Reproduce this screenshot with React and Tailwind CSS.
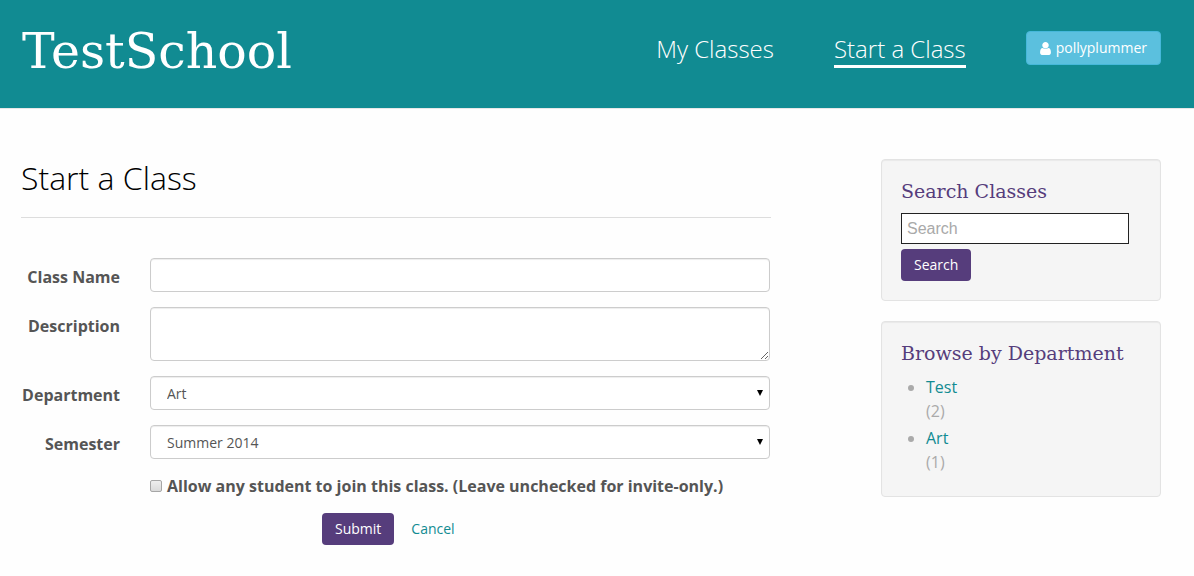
import React, { useState } from 'react';

const DEPARTMENTS = [
  { name: 'Test', count: 2 },
  { name: 'Art', count: 1 },
];

const SEMESTERS = ['Summer 2014', 'Fall 2014', 'Spring 2015'];

const SLAB = "font-['DejaVu_Serif',serif]";
const FIELD = 'block w-full rounded border border-[#cccccc] bg-white text-sm text-[#555555] shadow-[inset_0_1px_1px_rgba(0,0,0,0.075)]';
const PRIMARY_BTN = 'h-8 rounded bg-[#563d7c] px-[13px] text-sm text-white hover:bg-[#45306a]';

function UserIcon() {
  return (
    <svg className="h-[13px] w-[11px]" viewBox="0 128 1280 1536" fill="currentColor" aria-hidden="true">
      <path d="M1280 1399q0 109-62.5 187t-150.5 78h-854q-88 0-150.5-78t-62.5-187q0-85 8.5-160.5t31.5-152 58.5-131 94-89 134.5-34.5q131 128 313 128t313-128q76 0 134.5 34.5t94 89 58.5 131 31.5 152 8.5 160.5zm-256-887q0 159-112.5 271.5t-271.5 112.5-271.5-112.5-112.5-271.5 112.5-271.5 271.5-112.5 271.5 112.5 112.5 271.5z" />
    </svg>
  );
}

function FormRow({ id, label, children }) {
  return (
    <div className="flex items-start gap-[30px]">
      <label htmlFor={id} className="w-[99px] shrink-0 pt-[7px] text-right text-base font-bold text-[#555555]">{label}</label>
      <div className="min-w-0 flex-1">{children}</div>
    </div>
  );
}

function SelectBox({ id, options, value, onChange }) {
  return (
    <div className="relative">
      <select id={id} value={value} onChange={(e) => onChange(e.target.value)} className={`${FIELD} h-[34px] appearance-none px-4 pt-0.5`}>
        {options.map((opt) => <option key={opt}>{opt}</option>)}
      </select>
      <svg className="pointer-events-none absolute top-3.5 right-1.5 h-1.5 w-2" viewBox="0 0 8 6" aria-hidden="true">
        <path d="M1 0h6L4 6z" />
      </svg>
    </div>
  );
}

function Well({ title, children }) {
  return (
    <section className="rounded border border-[#e3e3e3] bg-[#f5f5f5] p-[19px] shadow-[inset_0_1px_1px_rgba(0,0,0,0.05)]">
      <h2 className={`${SLAB} text-[19px] leading-6 text-[#563d7c]`}>{title}</h2>
      {children}
    </section>
  );
}

export default function App() {
  const [department, setDepartment] = useState('Art');
  const [semester, setSemester] = useState(SEMESTERS[0]);
  const [open, setOpen] = useState(false);

  return (
    <div className="min-h-screen bg-[#fefefe] font-['Open_Sans',sans-serif] text-base text-[#555555]">
      <header className="flex h-[109px] items-start justify-between border-b border-[#e7e7e7] bg-[#118b92] pr-[33px] pl-[22px]">
        <a href="#" className={`${SLAB} pt-5 text-[49px] leading-[64px] text-white`}>TestSchool</a>
        <nav className="flex items-start gap-[60px] pt-[31px] text-white">
          <div className="flex gap-[60px] pt-0.5 text-2xl leading-8 font-light">
            <a href="#">My Classes</a>
            <a href="#" className="border-b-3 border-white">Start a Class</a>
          </div>
          <button type="button" className="flex h-[34px] items-center gap-[5px] rounded border border-[#46b8da] bg-[#5bc0de] px-[13px] text-sm">
            <UserIcon />
            pollyplummer
          </button>
        </nav>
      </header>

      <div className="flex items-start gap-[110px] pt-[50px] pr-[33px] pb-[30px] pl-[21px]">
        <main className="min-w-0 flex-1">
          <h1 className="border-b border-[#dddddd] pb-5 text-[32px] leading-[38px] font-light text-black">Start a Class</h1>

          <form className="mt-10 flex flex-col gap-[15px] pr-px" onSubmit={(e) => e.preventDefault()}>
            <FormRow id="name" label="Class Name">
              <input id="name" type="text" className={`${FIELD} h-[34px] px-3`} />
            </FormRow>
            <FormRow id="description" label="Description">
              <textarea id="description" className={`${FIELD} h-[54px] resize px-3 py-1.5`} />
            </FormRow>
            <FormRow id="department" label="Department">
              <SelectBox id="department" options={['Art', 'Test']} value={department} onChange={setDepartment} />
            </FormRow>
            <FormRow id="semester" label="Semester">
              <SelectBox id="semester" options={SEMESTERS} value={semester} onChange={setSemester} />
            </FormRow>

            <label className="ml-[129px] flex items-center gap-[5px] font-bold">
              <input
                type="checkbox"
                checked={open}
                onChange={(e) => setOpen(e.target.checked)}
                className="size-3 shrink-0 appearance-none rounded-xs border border-[#a6a6a6] bg-linear-to-b from-[#eeeeee] to-[#dadada] checked:from-[#563d7c] checked:to-[#563d7c]"
              />
              Allow any student to join this class. (Leave unchecked for invite-only.)
            </label>

            <div className="ml-[301px] flex items-center gap-[17px] text-sm">
              <button type="submit" className={PRIMARY_BTN}>Submit</button>
              <a href="#" className="text-[#118b92]">Cancel</a>
            </div>
          </form>
        </main>

        <aside className="flex w-[280px] shrink-0 flex-col gap-5">
          <Well title="Search Classes">
            <form onSubmit={(e) => e.preventDefault()}>
              <input
                type="text"
                aria-label="Search classes"
                placeholder="Search"
                className="mt-2.5 mb-[5px] block h-[31px] w-[228px] border border-[#222222] bg-white px-[5px] font-['Liberation_Sans',sans-serif] text-base placeholder:text-[#a9a9a9]"
              />
              <button type="submit" className={PRIMARY_BTN}>Search</button>
            </form>
          </Well>

          <Well title="Browse by Department">
            <ul className="mt-2.5 mb-[3px] list-disc space-y-[3px] pl-[25px] text-[#aaaaaa]">
              {DEPARTMENTS.map((dept) => (
                <li key={dept.name}>
                  <a href="#" className="text-[#118b92]">{dept.name}</a>
                  <div>({dept.count})</div>
                </li>
              ))}
            </ul>
          </Well>
        </aside>
      </div>
    </div>
  );
}
